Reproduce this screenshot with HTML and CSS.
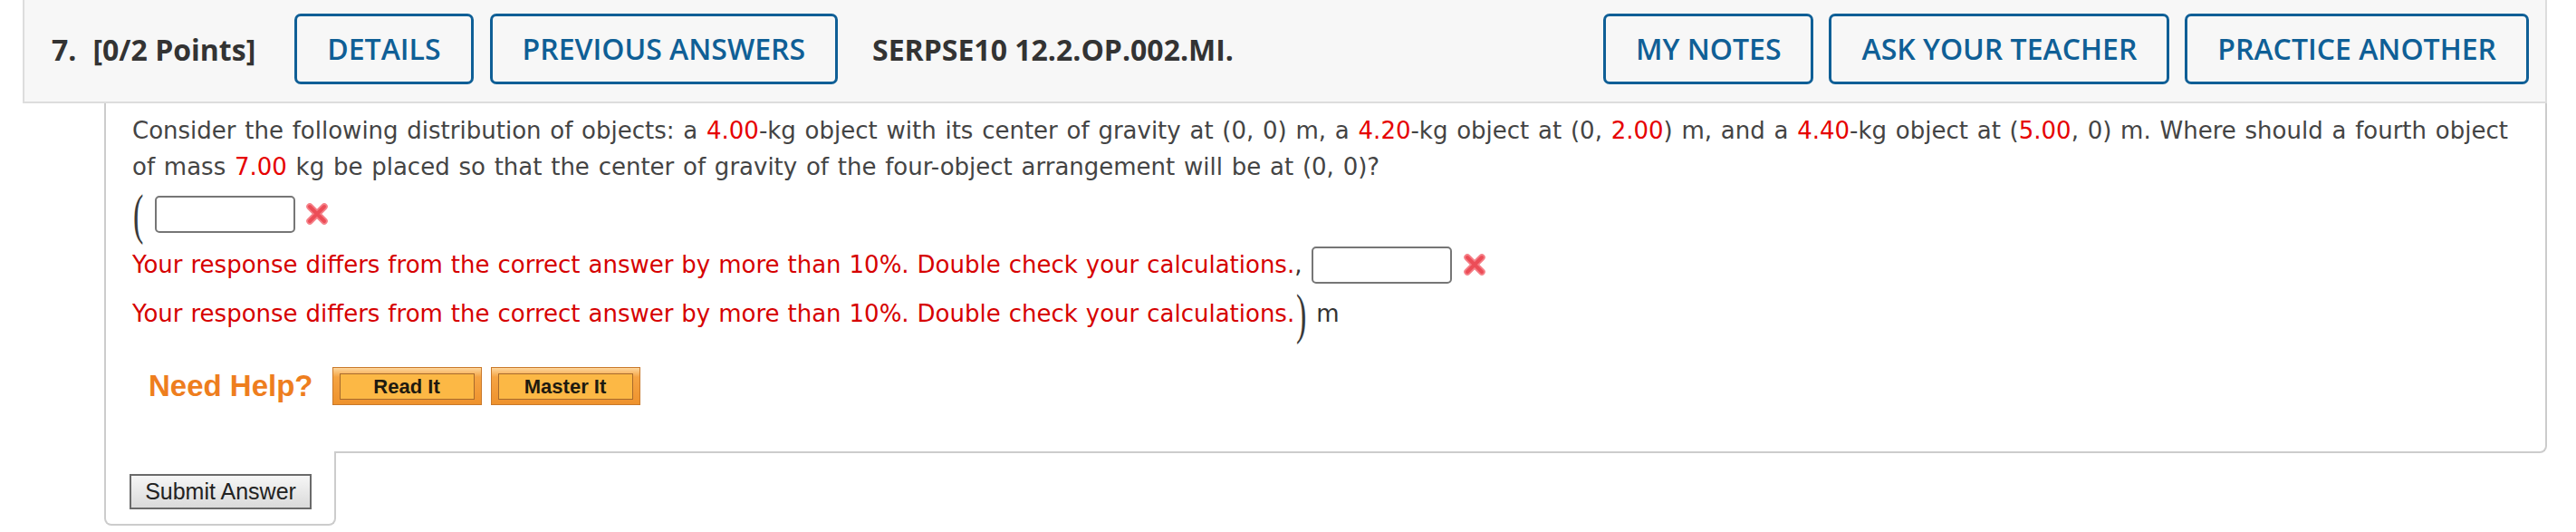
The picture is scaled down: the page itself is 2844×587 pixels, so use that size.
FILE: index.html
```html
<!DOCTYPE html>
<html>
<head>
<meta charset="utf-8">
<link rel="stylesheet" href="styles.css">
</head>
<body>
<div class="question">
  <div class="qhead">
    <span class="qnum">7.</span>
    <span class="qpts">[0/2 Points]</span>
    <div class="hgroup">
      <button class="hbtn">DETAILS</button>
      <button class="hbtn">PREVIOUS ANSWERS</button>
    </div>
    <span class="qcode">SERPSE10 12.2.OP.002.MI.</span>
    <div class="hgroup hright">
      <button class="hbtn">MY NOTES</button>
      <button class="hbtn">ASK YOUR TEACHER</button>
      <button class="hbtn">PRACTICE ANOTHER</button>
    </div>
  </div>
  <div class="qbody">
    <div class="content">
      <p class="prompt">Consider the following distribution of objects: a <span class="num">4.00</span>-kg object with its center of gravity at (0, 0) m, a <span class="num">4.20</span>-kg object at (0, <span class="num">2.00</span>) m, and a <span class="num">4.40</span>-kg object at (<span class="num">5.00</span>, 0) m. Where should a fourth object of mass <span class="num">7.00</span> kg be placed so that the center of gravity of the four-object arrangement will be at (0, 0)?</p>
      <div class="ans-row row1">
        <span class="paren">(</span>
        <span class="field"></span>
        <svg class="xmark" viewBox="0 0 26 26" width="26" height="26"><path d="M5 5 L21 21 M21 5 L5 21" stroke="#f58088" stroke-width="7.5" stroke-linecap="round"/><path d="M5 5 L21 21 M21 5 L5 21" stroke="#ec4d57" stroke-width="4" stroke-linecap="round"/></svg>
      </div>
      <div class="ans-row row2">
        <span class="err">Your response differs from the correct answer by more than 10%. Double check your calculations.</span><span class="txt comma">,</span>
        <span class="field field2"></span>
        <svg class="xmark xmark2" viewBox="0 0 26 26" width="26" height="26"><path d="M5 5 L21 21 M21 5 L5 21" stroke="#f58088" stroke-width="7.5" stroke-linecap="round"/><path d="M5 5 L21 21 M21 5 L5 21" stroke="#ec4d57" stroke-width="4" stroke-linecap="round"/></svg>
      </div>
      <div class="ans-row row3">
        <span class="err">Your response differs from the correct answer by more than 10%. Double check your calculations.</span><span class="paren rparen">)</span><span class="txt unit">m</span>
      </div>
      <div class="help">
        <span class="need">Need Help?</span>
        <span class="obtn"><span class="obtn-in">Read It</span></span>
        <span class="obtn"><span class="obtn-in">Master It</span></span>
      </div>
    </div>
    <div class="submit-tab">
      <button class="submit">Submit Answer</button>
    </div>
  </div>
</div>
</body>
</html>
```

FILE: styles.css
```css
body {
  margin: 0;
  background: #ffffff;
  font-family: "DejaVu Sans", Verdana, sans-serif;
}

.qhead {
  margin: 0 32px 0 25px;
  height: 114px;
  box-sizing: border-box;
  background: #f7f7f7;
  border: 2px solid #dddddd;
  border-top: 0;
  display: flex;
  align-items: center;
  padding: 15px 18px 19px 30px;
  font-family: "Open Sans", sans-serif;
  color: #333333;
}

.qnum {
  font-size: 32px;
  font-weight: 700;
  margin-right: 18px;
}

.qpts {
  font-size: 32px;
  font-weight: 700;
  margin-right: 43px;
}

.hgroup {
  display: flex;
  gap: 18px;
}

.hright {
  margin-left: auto;
  gap: 17px;
}

.hbtn {
  height: 78px;
  box-sizing: border-box;
  border: 3px solid #0f5f96;
  border-radius: 7px;
  background: transparent;
  color: #0f5f96;
  font-family: "Open Sans", sans-serif;
  font-weight: 600;
  font-size: 32px;
  padding: 0 33px;
  line-height: 1;
}

.qcode {
  margin-left: 38px;
  font-size: 32px;
  font-weight: 700;
}

.qbody {
  margin: 0 32px 0 115px;
}

.content {
  border: 2px solid #cccccc;
  border-top: 0;
  border-radius: 0 0 8px 0;
  padding: 10px 28px 51px 29px;
  color: #444444;
  font-size: 26px;
}

.prompt {
  margin: 0;
  line-height: 40px;
  word-spacing: 1.5px;
}

.num {
  color: #e60000;
}

.ans-row {
  display: flex;
  align-items: center;
  line-height: 40px;
}

.row1 {
  height: 56px;
  margin-top: 4px;
}

.row2 {
  height: 56px;
}

.row3 {
  height: 52px;
}

.paren {
  display: inline-block;
  width: 12px;
  font-family: "Liberation Serif", serif;
  font-size: 62px;
  line-height: 57px;
  height: 57px;
  color: #3a3a3a;
  transform: scaleX(0.55);
  transform-origin: left center;
}

.row1 .paren {
  margin-left: 1px;
  margin-right: 12px;
}

.rparen {
  margin-left: 2px;
  margin-right: 10px;
}

.field {
  display: inline-block;
  width: 155px;
  height: 41px;
  box-sizing: border-box;
  border: 2px solid #767676;
  border-radius: 5px;
  background: #ffffff;
}

.field2 {
  margin-left: 11px;
}

.xmark {
  margin-left: 11px;
  flex: none;
}

.xmark2 {
  margin-left: 12px;
}

.err {
  color: #d60000;
  word-spacing: 0.7px;
}

.txt {
  color: #333333;
}

.help {
  display: flex;
  align-items: center;
  margin-top: 33px;
  padding-left: 18px;
  height: 42px;
}

.need {
  font-family: "Liberation Sans", Arial, sans-serif;
  font-weight: 700;
  font-size: 33px;
  color: #ee7e1e;
  margin-right: 21px;
}

.obtn {
  display: flex;
  width: 165px;
  height: 42px;
  box-sizing: border-box;
  padding: 6px 7px 5px 7px;
  margin-right: 10px;
  border: 1px solid #c9792a;
  background: linear-gradient(#fdd69c 0%, #f5a443 25%, #ee922d 100%);
}

.obtn-in {
  flex: 1;
  display: flex;
  align-items: center;
  justify-content: center;
  border: 1px solid #a86a2c;
  background: #fcb845;
  font-family: "Liberation Sans", Arial, sans-serif;
  font-weight: 700;
  font-size: 22px;
  color: #1e1a10;
}

.submit-tab {
  position: relative;
  margin-top: -2px;
  width: 256px;
  box-sizing: border-box;
  background: #ffffff;
  border: 2px solid #cccccc;
  border-top: 0;
  border-radius: 0 0 8px 8px;
  padding: 25px 0 16px 26px;
}

.submit {
  display: block;
  width: 201px;
  height: 39px;
  box-sizing: border-box;
  border: 2px solid #6a6a6a;
  background: linear-gradient(#f6f6f6, #dadada);
  font-family: "Liberation Sans", Arial, sans-serif;
  font-size: 25px;
  color: #222222;
  padding: 0;
}
```
